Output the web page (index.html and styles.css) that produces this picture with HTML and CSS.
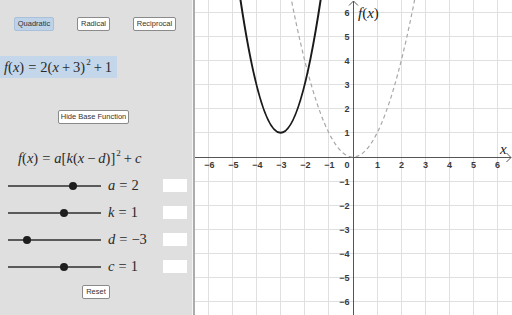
FILE: index.html
```html
<!DOCTYPE html>
<html>
<head>
<meta charset="utf-8">
<link rel="stylesheet" href="styles.css">
</head>
<body>
<div class="app">
  <div class="panel">
    <div class="btn-row">
      <button class="btn btn-active w-quad">Quadratic</button>
      <button class="btn w-rad">Radical</button>
      <button class="btn w-rec">Reciprocal</button>
    </div>
    <div class="formula-box">
      <span class="math"><i>f</i>(<i>x</i>)<span class="op">=</span>2(<i>x</i><span class="op2">+</span>3)<sup>2</sup><span class="op2">+</span>1</span>
    </div>
    <div class="hide-row"><button class="btn w-hide">Hide Base Function</button></div>
    <div class="formula2">
      <span class="math"><i>f</i>(<i>x</i>)<span class="op">=</span><i>a</i>[<i>k</i>(<i>x</i><span class="op2">−</span><i>d</i>)]<sup>2</sup><span class="op2">+</span><i>c</i></span>
    </div>
    <div class="sliders">
      <div class="slider-row">
        <div class="slider"><div class="track"></div><div class="knob" style="left:70%"></div></div>
        <span class="math label"><i>a</i><span class="op">=</span>2</span>
        <div class="input"></div>
      </div>
      <div class="slider-row">
        <div class="slider"><div class="track"></div><div class="knob" style="left:60%"></div></div>
        <span class="math label"><i>k</i><span class="op">=</span>1</span>
        <div class="input"></div>
      </div>
      <div class="slider-row">
        <div class="slider"><div class="track"></div><div class="knob" style="left:20%"></div></div>
        <span class="math label"><i>d</i><span class="op">=</span>−3</span>
        <div class="input"></div>
      </div>
      <div class="slider-row">
        <div class="slider"><div class="track"></div><div class="knob" style="left:60%"></div></div>
        <span class="math label"><i>c</i><span class="op">=</span>1</span>
        <div class="input"></div>
      </div>
    </div>
    <div class="reset-row"><button class="btn w-reset">Reset</button></div>
  </div>
  <div class="divider"></div>
  <div class="graph">
    <svg width="317" height="315" viewBox="195 0 317 315" xmlns="http://www.w3.org/2000/svg">
      <g class="grid">
        <line x1="208.5" y1="0" x2="208.5" y2="315"/>
        <line x1="232.5" y1="0" x2="232.5" y2="315"/>
        <line x1="256.5" y1="0" x2="256.5" y2="315"/>
        <line x1="280.5" y1="0" x2="280.5" y2="315"/>
        <line x1="304.5" y1="0" x2="304.5" y2="315"/>
        <line x1="328.5" y1="0" x2="328.5" y2="315"/>
        <line x1="377.5" y1="0" x2="377.5" y2="315"/>
        <line x1="401.5" y1="0" x2="401.5" y2="315"/>
        <line x1="425.5" y1="0" x2="425.5" y2="315"/>
        <line x1="449.5" y1="0" x2="449.5" y2="315"/>
        <line x1="473.5" y1="0" x2="473.5" y2="315"/>
        <line x1="497.5" y1="0" x2="497.5" y2="315"/>
        <line x1="195" y1="12.5" x2="512" y2="12.5"/>
        <line x1="195" y1="36.5" x2="512" y2="36.5"/>
        <line x1="195" y1="60.5" x2="512" y2="60.5"/>
        <line x1="195" y1="84.5" x2="512" y2="84.5"/>
        <line x1="195" y1="108.5" x2="512" y2="108.5"/>
        <line x1="195" y1="132.5" x2="512" y2="132.5"/>
        <line x1="195" y1="181.5" x2="512" y2="181.5"/>
        <line x1="195" y1="205.5" x2="512" y2="205.5"/>
        <line x1="195" y1="229.5" x2="512" y2="229.5"/>
        <line x1="195" y1="253.5" x2="512" y2="253.5"/>
        <line x1="195" y1="277.5" x2="512" y2="277.5"/>
        <line x1="195" y1="301.5" x2="512" y2="301.5"/>
      </g>
      <g class="axes">
        <line x1="195" y1="157.5" x2="511" y2="157.5"/>
        <line x1="353.5" y1="1" x2="353.5" y2="315"/>
        <polyline points="506.5,153 511,157.5 506.5,162"/>
        <polyline points="349,5.5 353.5,1 358,5.5"/>
      </g>
      <g class="xlabels">
        <text x="209.5" y="168">−6</text>
        <text x="233.5" y="168">−5</text>
        <text x="257.5" y="168">−4</text>
        <text x="281.5" y="168">−3</text>
        <text x="305.5" y="168">−2</text>
        <text x="329.5" y="168">−1</text>
        <text x="377.5" y="168">1</text>
        <text x="401.5" y="168">2</text>
        <text x="425.5" y="168">3</text>
        <text x="449.5" y="168">4</text>
        <text x="473.5" y="168">5</text>
        <text x="497.5" y="168">6</text>
      </g>
      <g class="ylabels">
        <text x="349.5" y="168">0</text>
        <text x="349.5" y="15.5">6</text>
        <text x="349.5" y="39.5">5</text>
        <text x="349.5" y="63.5">4</text>
        <text x="349.5" y="87.5">3</text>
        <text x="349.5" y="111.5">2</text>
        <text x="349.5" y="135.5">1</text>
        <text x="349.5" y="184.5">−1</text>
        <text x="349.5" y="208.5">−2</text>
        <text x="349.5" y="232.5">−3</text>
        <text x="349.5" y="256.5">−4</text>
        <text x="349.5" y="280.5">−5</text>
        <text x="349.5" y="304.5">−6</text>
      </g>
      <text class="axis-name" x="358" y="18"><tspan font-style="italic">f</tspan>(<tspan font-style="italic">x</tspan>)</text>
      <text class="axis-name" x="500" y="154" font-style="italic">x</text>
      <path class="base" d="M287.8,-19.05 Q353,333.05 418.2,-19.05"/>
      <path class="curve" d="M237.08,-23.64 Q280.55,289.34 324.02,-23.64"/>
    </svg>
  </div>
</div>
</body>
</html>
```
FILE: styles.css
```css
* { box-sizing: border-box; }
html, body { margin: 0; padding: 0; }
body { width: 512px; height: 315px; overflow: hidden; background: #fff; font-family: "Liberation Sans", Arial, sans-serif; }
.app { display: flex; width: 512px; height: 315px; }
.panel { width: 192px; height: 315px; background: #dfdfdf; display: flex; flex-direction: column; flex-shrink: 0; }
.divider { width: 3px; height: 315px; flex-shrink: 0; border-left: 1px solid #f4f4f4; background: #acacac; }
.graph { width: 317px; height: 315px; flex-shrink: 0; }
.graph svg { display: block; }

.btn { height: 14px; padding: 0; margin: 0; font-family: "Liberation Sans", Arial, sans-serif; font-size: 7.5px; color: #333; background: #fff; border: 1px solid #8a8a8a; border-radius: 2px; line-height: 12px; }
.btn-active { background: #bed2e8; border-color: #a9c0da; }
.w-quad { width: 40px; }
.w-rad { width: 33px; }
.w-rec { width: 43px; }
.w-hide { width: 71px; }
.w-reset { width: 28px; }

.btn-row { display: flex; gap: 23px; padding: 17px 0 0 14px; }
.formula-box { margin-top: 25px; width: 117px; height: 22px; background: #c3d6ea; display: flex; align-items: center; padding-left: 4px; }
.hide-row { margin-top: 32px; padding-left: 58px; display: flex; }
.formula2 { margin-top: 24px; height: 20px; padding-left: 18px; display: flex; align-items: center; }
.reset-row { margin-top: 5px; padding-left: 82px; display: flex; }

.math { font-family: "Liberation Serif", "Times New Roman", serif; font-size: 14.5px; color: #2a2a2a; white-space: nowrap; }
.math i { font-style: italic; }
.math .op { margin: 0 4px; }
.math .op2 { margin: 0 3px; }
.math sup { font-size: 9px; vertical-align: 0; position: relative; top: -7px; margin-left: 1px; }

.sliders { margin-top: 4px; display: flex; flex-direction: column; }
.slider-row { height: 27px; display: flex; align-items: center; }
.slider { position: relative; width: 93px; height: 8px; margin-left: 8px; }
.track { position: absolute; left: 0; right: 0; top: 3px; height: 2px; background: #5a5a5a; }
.knob { position: absolute; top: 0; width: 8px; height: 8px; margin-left: -4px; border-radius: 50%; background: #1e1e1e; }
.label { margin-left: 7px; width: 55px; }
.input { width: 24px; height: 13px; background: #fff; margin-left: 0; }

.grid line { stroke: #e0e0e0; stroke-width: 1; }
.axes line, .axes polyline { stroke: #555; stroke-width: 1; fill: none; }
.xlabels text { font-family: "Liberation Sans", Arial, sans-serif; font-size: 9px; font-weight: bold; fill: #3a3a3a; text-anchor: middle; }
.ylabels text { font-family: "Liberation Sans", Arial, sans-serif; font-size: 9px; font-weight: bold; fill: #3a3a3a; text-anchor: end; }
.axis-name { font-family: "Liberation Serif", "Times New Roman", serif; font-size: 15px; fill: #222; }
.curve { fill: none; stroke: #1a1a1a; stroke-width: 2; }
.base { fill: none; stroke: #a8a8a8; stroke-width: 1.2; stroke-dasharray: 4 3; }
```
